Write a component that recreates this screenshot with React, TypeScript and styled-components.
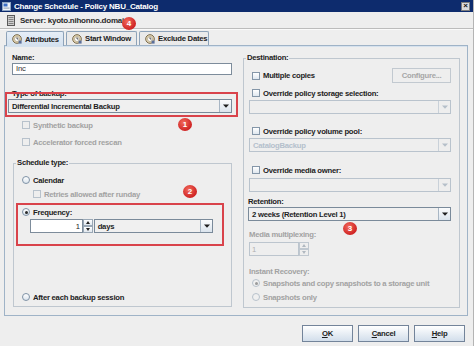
import React from "react";
import styled, { createGlobalStyle, css } from "styled-components";

const Global = createGlobalStyle`
  html, body { margin: 0; padding: 0; background: #eeeeee; }
  body {
    font-family: "Liberation Sans", Arial, sans-serif;
    font-size: 7.7px;
    font-weight: bold;
    letter-spacing: -0.25px;
    color: #222;
  }
  #root { width: 474px; height: 346px; overflow: hidden; }
`;

const Window = styled.div`
  position: relative;
  width: 474px;
  height: 346px;
  box-sizing: border-box;
  background: #eeeeee;
  border-right: 1px solid #b4b4b4;
  display: flex;
  flex-direction: column;
`;

const TitleBar = styled.div`
  height: 12px;
  background: #0d2b6d;
  display: flex;
  align-items: center;
  padding: 0 2px;
  gap: 3px;
`;

const TitleText = styled.div`
  flex: 1;
  color: #fff;
  font-size: 8px;
  letter-spacing: -0.2px;
`;

const CloseBtn = styled.div`
  width: 9px;
  height: 9px;
  box-sizing: border-box;
  background: #dcdcdc;
  border: 1px solid #7d7d7d;
  display: flex;
  align-items: center;
  justify-content: center;
  font-size: 8px;
  line-height: 1;
  color: #111;
  letter-spacing: 0;
  margin-right: 1px;
`;

const ServerRow = styled.div`
  height: 16px;
  display: flex;
  align-items: center;
  gap: 5px;
  padding-left: 7px;
  border-bottom: 1px solid #bcbcbc;
  box-shadow: 0 1px 0 #fafafa;
  color: #2a2a2a;
  font-size: 8px;
`;

const TabArea = styled.div`
  margin: 2px 0 0 4px;
  width: 464px;
  display: flex;
  flex-direction: column;
`;

const TabStrip = styled.div`
  display: flex;
  align-items: flex-end;
  gap: 2px;
  padding-left: 2px;
  height: 14px;
`;

const Tab = styled.div<{ $w: number; $active?: boolean }>`
  width: ${(p) => p.$w}px;
  height: ${(p) => (p.$active ? 15 : 14)}px;
  box-sizing: border-box;
  border: 1px solid #8ea3b9;
  border-bottom: none;
  border-radius: 2px 2px 0 0;
  display: flex;
  align-items: center;
  gap: 3px;
  padding-left: 5px;
  background: #eaeaea;
  ${(p) =>
    p.$active &&
    css`
      background: linear-gradient(#e6eef7, #d3e0ee);
      margin-bottom: -1px;
      position: relative;
      z-index: 1;
    `}
`;

const TabPanel = styled.div`
  height: 271px;
  box-sizing: border-box;
  border: 1px solid #9fb3c7;
  box-shadow: inset 0 1px 0 #d6e2ee;
  display: grid;
  grid-template-columns: 220px 217px;
  column-gap: 11px;
  padding: 0 7px;
  align-items: start;
`;

const Column = styled.div`
  display: flex;
  flex-direction: column;
`;

const Label = styled.div<{ $mt?: number; $disabled?: boolean; $ml?: number }>`
  height: 10px;
  line-height: 10px;
  margin-top: ${(p) => p.$mt ?? 0}px;
  margin-left: ${(p) => p.$ml ?? 0}px;
  color: ${(p) => (p.$disabled ? "#a2a2a2" : "#222")};
  white-space: nowrap;
`;

const TextInput = styled.div`
  height: 12px;
  box-sizing: border-box;
  border: 1px solid #7d8c9b;
  background: #fff;
  font-weight: normal;
  color: #333;
  padding-left: 3px;
  line-height: 10px;
`;

const Combo = styled.div<{ $mt?: number; $ml?: number; $w?: string; $disabled?: boolean; $h?: number }>`
  height: ${(p) => p.$h ?? 14}px;
  margin-top: ${(p) => p.$mt ?? 0}px;
  margin-left: ${(p) => p.$ml ?? 0}px;
  width: ${(p) => p.$w ?? "auto"};
  box-sizing: border-box;
  border: 1px solid ${(p) => (p.$disabled ? "#b9c3cd" : "#7a8a9a")};
  background: ${(p) => (p.$disabled ? "#eeeeee" : "#f0f0f0")};
  display: flex;
  align-items: stretch;
  color: ${(p) => (p.$disabled ? "#b4c0cc" : "#1e1e1e")};
`;

const ComboText = styled.div`
  flex: 1;
  padding-left: 3px;
  display: flex;
  align-items: center;
  white-space: nowrap;
  overflow: hidden;
`;

const ArrowBtn = styled.div<{ $disabled?: boolean }>`
  width: 11px;
  border-left: 1px solid ${(p) => (p.$disabled ? "#c9d1d9" : "#a8b6c4")};
  background: ${(p) => (p.$disabled ? "#eeeeee" : "linear-gradient(#fbfcfd, #dbe4ed)")};
  display: flex;
  align-items: center;
  justify-content: center;
`;

const CheckRow = styled.div<{ $mt?: number; $ml?: number; $disabled?: boolean; $h?: number }>`
  height: ${(p) => p.$h ?? 12}px;
  margin-top: ${(p) => p.$mt ?? 0}px;
  margin-left: ${(p) => p.$ml ?? 0}px;
  display: flex;
  align-items: center;
  gap: 3px;
  color: ${(p) => (p.$disabled ? "#a2a2a2" : "#222")};
  white-space: nowrap;
`;

const Box = styled.span<{ $disabled?: boolean }>`
  width: 8px;
  height: 8px;
  box-sizing: border-box;
  border: 1px solid ${(p) => (p.$disabled ? "#b8c2cc" : "#8496a8")};
  background: ${(p) => (p.$disabled ? "#eeeeee" : "linear-gradient(#ffffff, #dfe7ef)")};
  flex: none;
`;

const Radio = styled.span<{ $disabled?: boolean; $on?: boolean }>`
  width: 8px;
  height: 8px;
  box-sizing: border-box;
  border-radius: 50%;
  border: 1px solid ${(p) => (p.$disabled ? "#b8c2cc" : "#7f92a6")};
  background: ${(p) => (p.$disabled ? "#f0f0f0" : "linear-gradient(#ffffff, #dbe4ed)")};
  flex: none;
  display: flex;
  align-items: center;
  justify-content: center;
  &::after {
    content: "";
    display: ${(p) => (p.$on ? "block" : "none")};
    width: 3px;
    height: 3px;
    border-radius: 50%;
    background: ${(p) => (p.$disabled ? "#9a9a9a" : "#2a2a2a")};
  }
`;

const FieldSet = styled.fieldset<{ $mt: number; $h: number; $ml?: number }>`
  margin: ${(p) => p.$mt}px 0 0 ${(p) => p.$ml ?? 0}px;
  padding: 0;
  min-width: 0;
  height: ${(p) => p.$h}px;
  box-sizing: border-box;
  border: 1px solid #bfc7cf;
`;

const Legend = styled.legend`
  margin-left: 2px;
  padding: 0 1px;
  height: 10px;
  line-height: 10px;
  color: #222;
`;

const FieldBody = styled.div<{ $pl: number; $pr: number }>`
  display: flex;
  flex-direction: column;
  padding: 0 ${(p) => p.$pr}px 0 ${(p) => p.$pl}px;
`;

const SpinRow = styled.div<{ $mt?: number; $ml?: number }>`
  margin-top: ${(p) => p.$mt ?? 0}px;
  margin-left: ${(p) => p.$ml ?? 0}px;
  display: flex;
  height: 14px;
`;

const SpinField = styled.div<{ $w: number; $disabled?: boolean }>`
  width: ${(p) => p.$w}px;
  box-sizing: border-box;
  border: 1px solid ${(p) => (p.$disabled ? "#bcc5ce" : "#7d8c9b")};
  background: ${(p) => (p.$disabled ? "#eeeeee" : "#fff")};
  font-weight: normal;
  color: ${(p) => (p.$disabled ? "#b0b0b0" : "#222")};
  display: flex;
  align-items: center;
  justify-content: ${(p) => (p.$disabled ? "flex-start" : "flex-end")};
  padding: 0 2px;
`;

const SpinButtons = styled.div`
  width: 10px;
  display: flex;
  flex-direction: column;
  margin: 0 1px 0 0;
`;

const SpinBtn = styled.div<{ $disabled?: boolean }>`
  flex: 1;
  box-sizing: border-box;
  border: 1px solid ${(p) => (p.$disabled ? "#c0c8d0" : "#9aa8b6")};
  background: ${(p) => (p.$disabled ? "#eeeeee" : "linear-gradient(#fff, #e1e8ef)")};
  display: flex;
  align-items: center;
  justify-content: center;
`;

const DestTop = styled.div`
  margin-top: 5px;
  height: 15px;
  display: flex;
  align-items: center;
  justify-content: space-between;
`;

const SmallButton = styled.div<{ $w: number; $disabled?: boolean }>`
  width: ${(p) => p.$w}px;
  height: 15px;
  box-sizing: border-box;
  border: 1px solid ${(p) => (p.$disabled ? "#c2c9d0" : "#7a8a9a")};
  background: ${(p) => (p.$disabled ? "#eeeeee" : "linear-gradient(#fff, #d6e1ec)")};
  color: ${(p) => (p.$disabled ? "#a6a6a6" : "#222")};
  display: flex;
  align-items: center;
  justify-content: center;
`;

const ButtonRow = styled.div`
  margin-top: 9px;
  display: flex;
  justify-content: flex-end;
  gap: 5px;
  padding-right: 8px;
`;

const DialogButton = styled.div`
  width: 51px;
  height: 17px;
  box-sizing: border-box;
  border: 1px solid #73849a;
  background: linear-gradient(#ffffff, #d2deeb);
  display: flex;
  align-items: center;
  justify-content: center;
  color: #1e1e1e;
  u { text-decoration: underline; }
`;

const RedBox = styled.div<{ $x: number; $y: number; $w: number; $h: number }>`
  position: absolute;
  left: ${(p) => p.$x}px;
  top: ${(p) => p.$y}px;
  width: ${(p) => p.$w}px;
  height: ${(p) => p.$h}px;
  box-sizing: border-box;
  border: 2px solid #d9434b;
  pointer-events: none;
`;

const Badge = styled.div<{ $x: number; $y: number }>`
  position: absolute;
  left: ${(p) => p.$x - 7}px;
  top: ${(p) => p.$y - 7}px;
  width: 14px;
  height: 13px;
  border-radius: 50%;
  background: radial-gradient(circle at 40% 35%, #f26a5c, #cf2323 70%);
  color: #fff;
  font-size: 8px;
  letter-spacing: 0;
  display: flex;
  align-items: center;
  justify-content: center;
`;

const DownArrow = ({ color = "#1e1e1e" }: { color?: string }) => (
  <svg width="6" height="4" viewBox="0 0 6 4">
    <path d="M0 0.5h6L3 3.8z" fill={color} />
  </svg>
);

const Tiny = ({ up, color = "#222" }: { up?: boolean; color?: string }) => (
  <svg width="4" height="3" viewBox="0 0 4 3">
    <path d={up ? "M0 3h4L2 0z" : "M0 0h4L2 3z"} fill={color} />
  </svg>
);

const TabIcon = () => (
  <svg width="10" height="10" viewBox="0 0 10 10">
    <circle cx="5" cy="5" r="4.3" fill="#e8dcbc" stroke="#6a5734" strokeWidth="0.9" />
    <circle cx="5" cy="5" r="2.5" fill="#ffffff" stroke="#8c7a55" strokeWidth="0.5" />
    <path d="M5 3.2V5h1.5" stroke="#2e2e2e" strokeWidth="0.8" fill="none" />
    <rect x="6.6" y="6.6" width="3" height="3" fill="#5b6f9a" />
  </svg>
);

const ServerIcon = () => (
  <svg width="8" height="11" viewBox="0 0 8 11">
    <rect x="0.5" y="0.5" width="7" height="10" fill="#cfcfcf" stroke="#5a5a5a" />
    <path d="M1.5 2.5h5M1.5 4.5h5M1.5 6.5h5M1.5 8.5h5" stroke="#707070" strokeWidth="0.8" />
  </svg>
);

const TitleIcon = () => (
  <svg width="9" height="9" viewBox="0 0 9 9">
    <rect x="0.5" y="0.5" width="8" height="8" fill="#eef2f8" stroke="#8fa6c4" />
    <rect x="1.5" y="1.5" width="4" height="3" fill="#3c6fc6" />
    <rect x="1.5" y="5.5" width="6" height="1.2" fill="#9aa9bd" />
  </svg>
);

const DropCombo = ({
  text,
  disabled,
  mt,
  ml,
  w,
  h,
}: {
  text?: string;
  disabled?: boolean;
  mt?: number;
  ml?: number;
  w?: string;
  h?: number;
}) => (
  <Combo $disabled={disabled} $mt={mt} $ml={ml} $w={w} $h={h}>
    <ComboText>{text}</ComboText>
    <ArrowBtn $disabled={disabled}>
      <DownArrow color={disabled ? "#b5bfc9" : "#1e1e1e"} />
    </ArrowBtn>
  </Combo>
);

export default function App() {
  return (
    <Window>
      <Global />
      <TitleBar>
        <TitleIcon />
        <TitleText>Change Schedule - Policy NBU_Catalog</TitleText>
        <CloseBtn>×</CloseBtn>
      </TitleBar>
      <ServerRow>
        <ServerIcon />
        <span>Server: kyoto.nihonno.domain</span>
      </ServerRow>
      <TabArea>
        <TabStrip>
          <Tab $w={58} $active>
            <TabIcon />
            Attributes
          </Tab>
          <Tab $w={71}>
            <TabIcon />
            Start Window
          </Tab>
          <Tab $w={70}>
            <TabIcon />
            Exclude Dates
          </Tab>
        </TabStrip>
        <TabPanel>
          <Column>
            <Label $mt={7}>Name:</Label>
            <TextInput>Inc</TextInput>
            <Label $mt={14}>Type of backup:</Label>
            <DropCombo text="Differential Incremental Backup" ml={-4} w="224px" />
            <CheckRow $mt={6} $ml={10} $disabled>
              <Box $disabled />
              Synthetic backup
            </CheckRow>
            <CheckRow $mt={5} $ml={10} $disabled>
              <Box $disabled />
              Accelerator forced rescan
            </CheckRow>
            <FieldSet $mt={10} $h={149} $ml={1}>
              <Legend>Schedule type:</Legend>
              <FieldBody $pl={8} $pr={18}>
                <CheckRow $mt={6}>
                  <Radio />
                  Calendar
                </CheckRow>
                <CheckRow $mt={2} $ml={11} $disabled>
                  <Box $disabled />
                  Retries allowed after runday
                </CheckRow>
                <CheckRow $mt={6}>
                  <Radio $on />
                  Frequency:
                </CheckRow>
                <SpinRow $mt={1} $ml={8}>
                  <SpinField $w={53}>1</SpinField>
                  <SpinButtons>
                    <SpinBtn>
                      <Tiny up />
                    </SpinBtn>
                    <SpinBtn>
                      <Tiny />
                    </SpinBtn>
                  </SpinButtons>
                  <DropCombo text="days" w="120px" />
                </SpinRow>
                <CheckRow $mt={58}>
                  <Radio />
                  After each backup session
                </CheckRow>
              </FieldBody>
            </FieldSet>
          </Column>
          <Column>
            <FieldSet $mt={7} $h={255}>
              <Legend>Destination:</Legend>
              <FieldBody $pl={5} $pr={8}>
                <DestTop>
                  <CheckRow $ml={3}>
                    <Box />
                    Multiple copies
                  </CheckRow>
                  <SmallButton $w={59} $disabled>
                    Configure...
                  </SmallButton>
                </DestTop>
                <CheckRow $mt={4} $ml={3}>
                  <Box />
                  Override policy storage selection:
                </CheckRow>
                <DropCombo disabled mt={1} />
                <CheckRow $mt={11} $ml={3}>
                  <Box />
                  Override policy volume pool:
                </CheckRow>
                <DropCombo disabled mt={1} text="CatalogBackup" />
                <CheckRow $mt={12} $ml={3}>
                  <Box />
                  Override media owner:
                </CheckRow>
                <DropCombo disabled mt={2} />
                <Label $mt={5} $ml={-1}>
                  Retention:
                </Label>
                <DropCombo text="2 weeks (Retention Level 1)" ml={-1} w="203px" />
                <Label $mt={9} $disabled>
                  Media multiplexing:
                </Label>
                <SpinRow $mt={2}>
                  <SpinField $w={50} $disabled>
                    1
                  </SpinField>
                  <SpinButtons>
                    <SpinBtn $disabled>
                      <Tiny up color="#b0b8c0" />
                    </SpinBtn>
                    <SpinBtn $disabled>
                      <Tiny color="#b0b8c0" />
                    </SpinBtn>
                  </SpinButtons>
                </SpinRow>
                <Label $mt={11} $disabled>
                  Instant Recovery:
                </Label>
                <CheckRow $ml={3} $disabled>
                  <Radio $disabled $on />
                  Snapshots and copy snapshots to a storage unit
                </CheckRow>
                <CheckRow $mt={2} $ml={3} $disabled>
                  <Radio $disabled />
                  Snapshots only
                </CheckRow>
              </FieldBody>
            </FieldSet>
          </Column>
        </TabPanel>
      </TabArea>
      <ButtonRow>
        <DialogButton>
          <span>
            <u>O</u>K
          </span>
        </DialogButton>
        <DialogButton>
          <span>
            <u>C</u>ancel
          </span>
        </DialogButton>
        <DialogButton>
          <span>
            <u>H</u>elp
          </span>
        </DialogButton>
      </ButtonRow>

      <RedBox $x={5} $y={92} $w={233} $h={25} />
      <RedBox $x={16} $y={203} $w={208} $h={43} />
      <Badge $x={129} $y={24}>4</Badge>
      <Badge $x={185} $y={125}>1</Badge>
      <Badge $x={190} $y={192}>2</Badge>
      <Badge $x={350} $y={229}>3</Badge>
    </Window>
  );
}
